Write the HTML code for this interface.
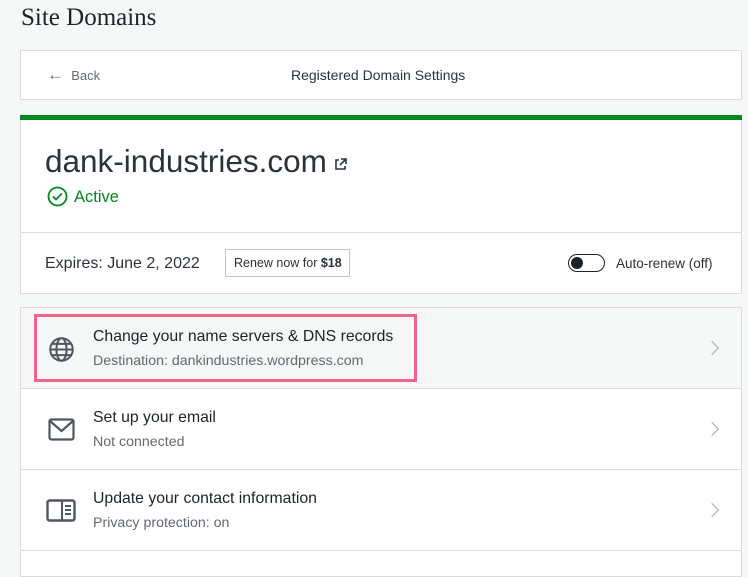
<!DOCTYPE html>
<html><head><style>
*{margin:0;padding:0;box-sizing:border-box}
body{width:748px;height:570px;overflow:hidden;background:#f6f7f7;font-family:"Liberation Sans",sans-serif;color:#2c3338;position:relative}
.a{position:absolute}
.card{position:absolute;left:20px;width:722px;background:#fff;border:1px solid #dcdcde}
.t{font-size:15.8px;color:#1d2327}
.s{font-size:14.2px;color:#646970}
.chev{position:absolute;right:24px;width:10px;height:10px;border-right:1.5px solid #a7aaad;border-top:1.5px solid #a7aaad;transform:rotate(45deg)}
</style></head><body>
<div class="a" style="left:21px;top:4px;font-family:'Liberation Serif',serif;font-size:25px;color:#1d2327">Site Domains</div>
<div class="card" style="top:50px;height:50px">
 <div class="a" style="left:26px;top:14px;font-size:13px;color:#646970"><span style="font-size:17px">&#8592;</span>&nbsp; Back</div>
 <div class="a" style="left:270px;top:16px;font-size:14px;color:#2c3338">Registered Domain Settings</div>
</div>
<div class="card" style="top:115px;height:179px;border-top:none">
 <div style="height:5px;background:#008a20;margin:0 -1px"></div>
 <div class="a" style="left:24px;top:28px;font-size:31.5px;color:#2c3338">dank-industries.com</div>
 <svg class="a" style="left:312px;top:42px" width="15" height="15" viewBox="0 0 15 15"><path d="M6 3H3v9h9V9M8 2h5v5M13 2L7 8" fill="none" stroke="#2c3338" stroke-width="1.6"/></svg>
 <svg class="a" style="left:26px;top:71px" width="21" height="21" viewBox="0 0 21 21"><circle cx="10.5" cy="10.5" r="9" fill="none" stroke="#008a20" stroke-width="1.8"/><path d="M6 10.5l3 3 6-6" fill="none" stroke="#008a20" stroke-width="1.8"/></svg>
 <div class="a" style="left:53px;top:73px;font-size:16.5px;color:#008a20">Active</div>
 <div class="a" style="left:0;right:0;top:117px;border-top:1px solid #dcdcde"></div>
 <div class="a" style="left:24px;top:140px;font-size:16px">Expires: June 2, 2022</div>
 <div class="a" style="left:204px;top:134px;width:125px;height:28px;border:1px solid #c3c4c7;font-size:12.5px;padding:6px 0 0 8px;color:#2c3338">Renew now for <b>$18</b></div>
 <div class="a" style="left:547px;top:139px;width:37px;height:18px;border:1.5px solid #1d2327;border-radius:9px"><div style="width:12px;height:12px;background:#1d2327;border-radius:50%;margin:1.5px 0 0 2px"></div></div>
 <div class="a" style="left:595px;top:141px;font-size:13.5px">Auto-renew (off)</div>
</div>
<div class="card" style="top:307px;height:270px">
 <div class="a" style="left:0;right:0;top:0;height:81px;background:#f6f7f7;border-bottom:1px solid #dcdcde"></div>
 <div class="a" style="left:0;right:0;top:161px;border-top:1px solid #dcdcde"></div>
 <div class="a" style="left:0;right:0;top:242px;border-top:1px solid #dcdcde"></div>
 <div class="a" style="left:13px;top:6px;width:383px;height:68px;border:3px solid #f0658e"></div>
 <svg class="a" style="left:27px;top:28px" width="27" height="27" viewBox="0 0 24 24"><g fill="none" stroke="#50575e" stroke-width="1.8"><circle cx="12" cy="12" r="10"/><ellipse cx="12" cy="12" rx="4.5" ry="10"/><path d="M2 12h20M4 7h16M4 17h16"/></g></svg>
 <div class="a t" style="left:72px;top:20px">Change your name servers &amp; DNS records</div>
 <div class="a s" style="left:72px;top:45px">Destination: dankindustries.wordpress.com</div>
 <div class="chev" style="top:35px"></div>
 <svg class="a" style="left:27px;top:110px" width="27" height="23" viewBox="0 0 27 23"><rect x="1.5" y="1.5" width="24" height="20" rx="2" fill="none" stroke="#50575e" stroke-width="2.2"/><path d="M2 3l11.5 10L25 3" fill="none" stroke="#50575e" stroke-width="2.2"/></svg>
 <div class="a t" style="left:72px;top:101px">Set up your email</div>
 <div class="a s" style="left:72px;top:126px">Not connected</div>
 <div class="chev" style="top:116px"></div>
 <svg class="a" style="left:25px;top:191px" width="30" height="23" viewBox="0 0 30 23"><rect x="1.5" y="1.5" width="27" height="20" rx="2" fill="none" stroke="#50575e" stroke-width="2.4"/><path d="M16 2v19M19 7h6M19 11h6M19 15h6" fill="none" stroke="#50575e" stroke-width="2"/></svg>
 <div class="a t" style="left:72px;top:182px">Update your contact information</div>
 <div class="a s" style="left:72px;top:207px">Privacy protection: on</div>
 <div class="chev" style="top:197px"></div>
</div>
</body></html>
